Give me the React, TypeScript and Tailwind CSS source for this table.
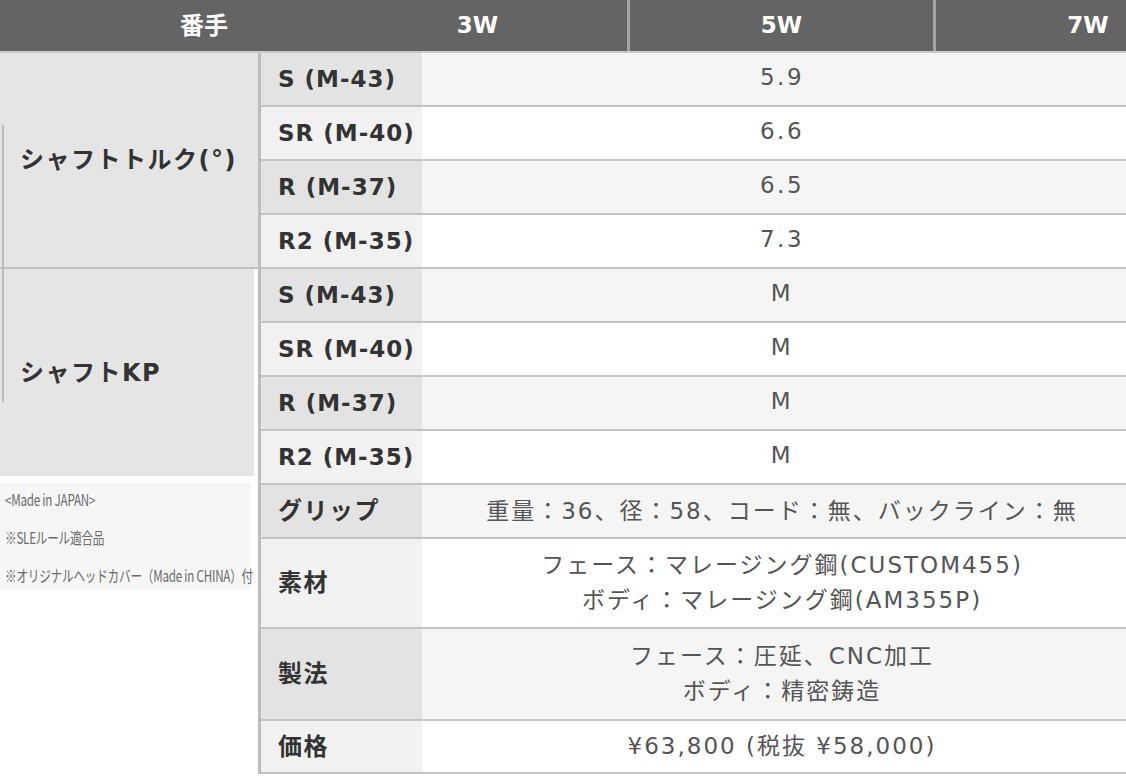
import React from "react";

const latin = "font-['DejaVu_Sans','Noto_Sans_CJK_JP',sans-serif]";

type Row = { label: string; value: string[]; h: string };

const shaftRows: { label: string; value: string }[] = [
  { label: "S (M-43)", value: "5.9" },
  { label: "SR (M-40)", value: "6.6" },
  { label: "R (M-37)", value: "6.5" },
  { label: "R2 (M-35)", value: "7.3" },
  { label: "S (M-43)", value: "M" },
  { label: "SR (M-40)", value: "M" },
  { label: "R (M-37)", value: "M" },
  { label: "R2 (M-35)", value: "M" },
];

const specRows: Row[] = [
  { label: "グリップ", value: ["重量：36、径：58、コード：無、バックライン：無"], h: "h-[54px]" },
  { label: "素材", value: ["フェース：マレージング鋼(CUSTOM455)", "ボディ：マレージング鋼(AM355P)"], h: "h-[90px]" },
  { label: "製法", value: ["フェース：圧延、CNC加工", "ボディ：精密鋳造"], h: "h-[92px]" },
  { label: "価格", value: ["¥63,800 (税抜 ¥58,000)"], h: "h-[53px]" },
];

export default function App() {
  return (
    <div className={`w-[1126px] h-[776px] overflow-hidden bg-white ${latin}`}>
      <div className="w-[1240px]">
        {/* header */}
        <div className="flex h-[51px] bg-[#646464] border-b-2 border-[#c9c9c9] text-white font-bold text-[23px] box-content">
          <div className="w-[328px] flex items-center pl-[180px] text-[24px]">番手</div>
          <div className="w-[299px] flex items-center justify-center">3W</div>
          <div className="w-[3px] bg-[#a4a4a4]" />
          <div className="w-[303px] flex items-center justify-center">5W</div>
          <div className="w-[3px] bg-[#a4a4a4]" />
          <div className="w-[304px] flex items-center justify-center">7W</div>
        </div>

        {/* body */}
        <div className="flex relative">
          <div className="absolute left-[2px] top-[72px] w-[2px] h-[277px] bg-[#bdbdbd]" />
          {/* left group column */}
          <div className="w-[258px] flex flex-col">
            <div className="h-[216px] bg-[#e5e5e5] border-b-2 border-[#c2c2c2] flex items-center pl-[20px] text-[24px] font-bold tracking-[1.5px] text-[#333]">
              シャフトトルク(°)
            </div>
            <div className="h-[207px] w-[254px] bg-[#e5e5e5] flex items-center pl-[20px] text-[24px] font-bold tracking-[1.5px] text-[#333]">
              シャフトKP
            </div>
            <div className="h-[7px]" />
            <div className="h-[107px] w-[251px] bg-[#f6f6f6] pl-[5px] pt-[6px] flex flex-col gap-[17px] text-[15.5px] leading-[21px] text-[#6a6a6a] font-['Noto_Sans_CJK_JP',sans-serif] tracking-[-0.3px]">
              <div className="origin-left scale-x-75 whitespace-nowrap">&lt;Made in JAPAN&gt;</div>
              <div className="origin-left scale-x-75 whitespace-nowrap">※SLEルール適合品</div>
              <div className="origin-left scale-x-75 whitespace-nowrap">※オリジナルヘッドカバー（Made in CHINA）付</div>
            </div>
          </div>
          {/* column border */}
          <div className="w-[3px] bg-[#bcbcbc] h-[721px]" />
          {/* rows */}
          <div className="w-[881px] flex flex-col">
            {shaftRows.map((r, i) => {
              const odd = i % 2 === 0;
              return (
                <div key={i} className="flex h-[54px] border-b-2 border-[#c4c4c4]">
                  <div
                    className={`w-[161px] flex items-center pl-[17px] text-[23px] font-bold tracking-[1px] text-[#333] ${
                      odd ? "bg-[#e3e3e3]" : "bg-[#f1f1f1]"
                    }`}
                  >
                    {r.label}
                  </div>
                  <div
                    className={`flex-1 flex items-center justify-center pb-[3px] text-[23px] tracking-[2.5px] text-[#555] ${
                      odd ? "bg-[#f5f5f5]" : "bg-white"
                    }`}
                  >
                    {r.value}
                  </div>
                </div>
              );
            })}
            {specRows.map((r, i) => {
              const odd = i % 2 === 0;
              return (
                <div key={i} className={`flex ${r.h} border-b-2 border-[#c4c4c4]`}>
                  <div
                    className={`w-[161px] flex items-center pl-[17px] text-[24px] font-bold tracking-[1.5px] text-[#333] ${
                      odd ? "bg-[#e3e3e3]" : "bg-[#f1f1f1]"
                    }`}
                  >
                    {r.label}
                  </div>
                  <div
                    className={`flex-1 flex flex-col items-center justify-center leading-[35px] text-[23px] tracking-[2px] text-[#555] ${
                      odd ? "bg-[#f5f5f5]" : "bg-white"
                    }`}
                  >
                    {r.value.map((v, j) => (
                      <div key={j} className="whitespace-nowrap">{v}</div>
                    ))}
                  </div>
                </div>
              );
            })}
          </div>
        </div>
      </div>
    </div>
  );
}
